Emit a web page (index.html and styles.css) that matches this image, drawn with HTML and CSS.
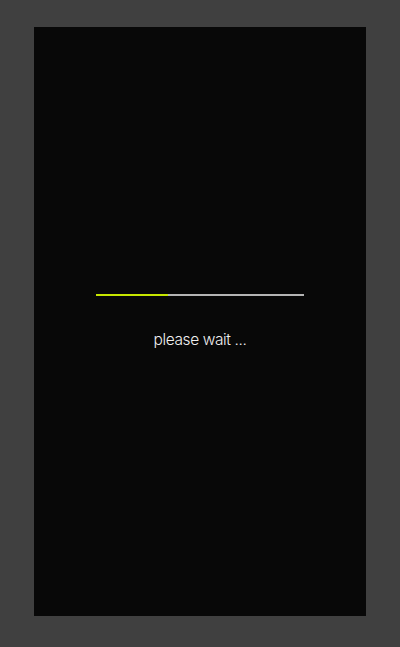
FILE: index.html
```html
<!DOCTYPE html>
<html>
<head>
<meta charset="utf-8">
<link rel="stylesheet" href="styles.css">
</head>
<body>
<div class="screen">
  <div class="loader">
    <div class="track"><div class="fill" style="width:34.6%"></div></div>
    <div class="label">please wait ...</div>
  </div>
</div>
</body>
</html>
```
FILE: styles.css
```css
html, body {
  margin: 0;
  padding: 0;
  background: #404040;
  width: 400px;
  height: 647px;
  overflow: hidden;
}
body {
  padding: 27px 34px 31px 34px;
  box-sizing: border-box;
}
.screen {
  width: 332px;
  height: 589px;
  background: #080808;
  display: flex;
  flex-direction: column;
  align-items: center;
}
.loader {
  margin-top: 267px;
  width: 208px;
  display: flex;
  flex-direction: column;
  align-items: center;
}
.track {
  width: 208px;
  height: 2px;
  background: #b4b4b4;
}
.fill {
  height: 100%;
  background: #c6e600;
}
.label {
  margin-top: 34px;
  font-family: Inter, "Noto Sans", sans-serif;
  font-size: 15.5px;
  font-weight: 300;
  line-height: 20px;
  color: #f0f0f0;
  letter-spacing: -0.4px;
}
```
